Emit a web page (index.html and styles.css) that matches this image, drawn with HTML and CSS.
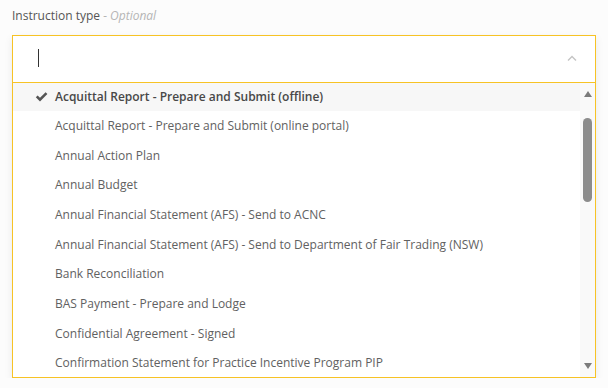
FILE: index.html
```html
<!DOCTYPE html>
<html>
<head>
<meta charset="utf-8">
<link rel="stylesheet" href="styles.css">
</head>
<body>
<div class="field">
  <div class="label">Instruction type <span class="opt">- Optional</span></div>
  <div class="select">
    <div class="control">
      <span class="caret"></span>
      <svg class="chev" width="10" height="6" viewBox="0 0 10 6"><path d="M1 5.5 L5 1.5 L9 5.5" fill="none" stroke="#c4c4c4" stroke-width="1.4"/></svg>
    </div>
    <div class="menu">
      <ul class="list">
        <li class="item selected"><svg class="check" width="13" height="10" viewBox="0 0 13 10"><path d="M0.8 5.2 L2.6 3.4 L5 5.8 L10.6 0.2 L12.4 2 L5 9.4 Z" fill="#555"/></svg>Acquittal Report - Prepare and Submit (offline)</li>
        <li class="item">Acquittal Report - Prepare and Submit (online portal)</li>
        <li class="item">Annual Action Plan</li>
        <li class="item">Annual Budget</li>
        <li class="item">Annual Financial Statement (AFS) - Send to ACNC</li>
        <li class="item">Annual Financial Statement (AFS) - Send to Department of Fair Trading (NSW)</li>
        <li class="item">Bank Reconciliation</li>
        <li class="item">BAS Payment - Prepare and Lodge</li>
        <li class="item">Confidential Agreement - Signed</li>
        <li class="item">Confirmation Statement for Practice Incentive Program PIP</li>
      </ul>
      <div class="scrollbar">
        <div class="arrow up"></div>
        <div class="track"><div class="thumb"></div></div>
        <div class="arrow down"></div>
      </div>
    </div>
  </div>
</div>
</body>
</html>
```
FILE: styles.css
```css
html, body {
  margin: 0;
  padding: 0;
  background: #fcfcfc;
  font-family: "Open Sans", "Noto Sans", sans-serif;
}
.field {
  padding: 8px 12px 0 12px;
}
.label {
  font-size: 12px;
  line-height: 16px;
  color: #555;
  height: 27px;
}
.opt {
  color: #b5b5b5;
  font-style: italic;
}
.select {
  width: 584px;
  border: 1px solid #f7c325;
  box-sizing: border-box;
  background: #fff;
  box-shadow: 0 3px 8px rgba(0,0,0,0.08);
}
.control {
  height: 46px;
  border-bottom: 1px solid #f7c325;
  display: flex;
  align-items: center;
  justify-content: space-between;
  padding: 0 18px 0 25px;
}
.caret {
  width: 1px;
  height: 18px;
  background: #333;
  margin-top: -2px;
}
.chev {
  display: block;
  margin-top: -2px;
}
.menu {
  display: flex;
  height: 294px;
  overflow: hidden;
}
.list {
  list-style: none;
  margin: 0;
  padding: 0;
  flex: 1;
}
.item {
  height: 29.7px;
  display: flex;
  align-items: center;
  padding-left: 42px;
  font-size: 12px;
  color: #616161;
  position: relative;
  white-space: nowrap;
}
.item.selected {
  background: #f7f7f7;
  color: #484848;
  font-weight: 600;
  height: 27.5px;
}
.check {
  position: absolute;
  left: 22px;
  top: 9px;
}
.scrollbar {
  width: 15px;
  background: #f9f9f9;
  display: flex;
  flex-direction: column;
  align-items: center;
}
.arrow {
  width: 0;
  height: 0;
  border-left: 4.5px solid transparent;
  border-right: 4.5px solid transparent;
}
.arrow.up {
  border-bottom: 6px solid #7c7c7c;
  margin-top: 8px;
}
.arrow.down {
  border-top: 6px solid #7c7c7c;
  margin-bottom: 8px;
}
.track {
  flex: 1;
  width: 9px;
  padding-top: 21px;
}
.thumb {
  width: 9px;
  height: 84px;
  border-radius: 4.5px;
  background: #8c8c8c;
}
```
